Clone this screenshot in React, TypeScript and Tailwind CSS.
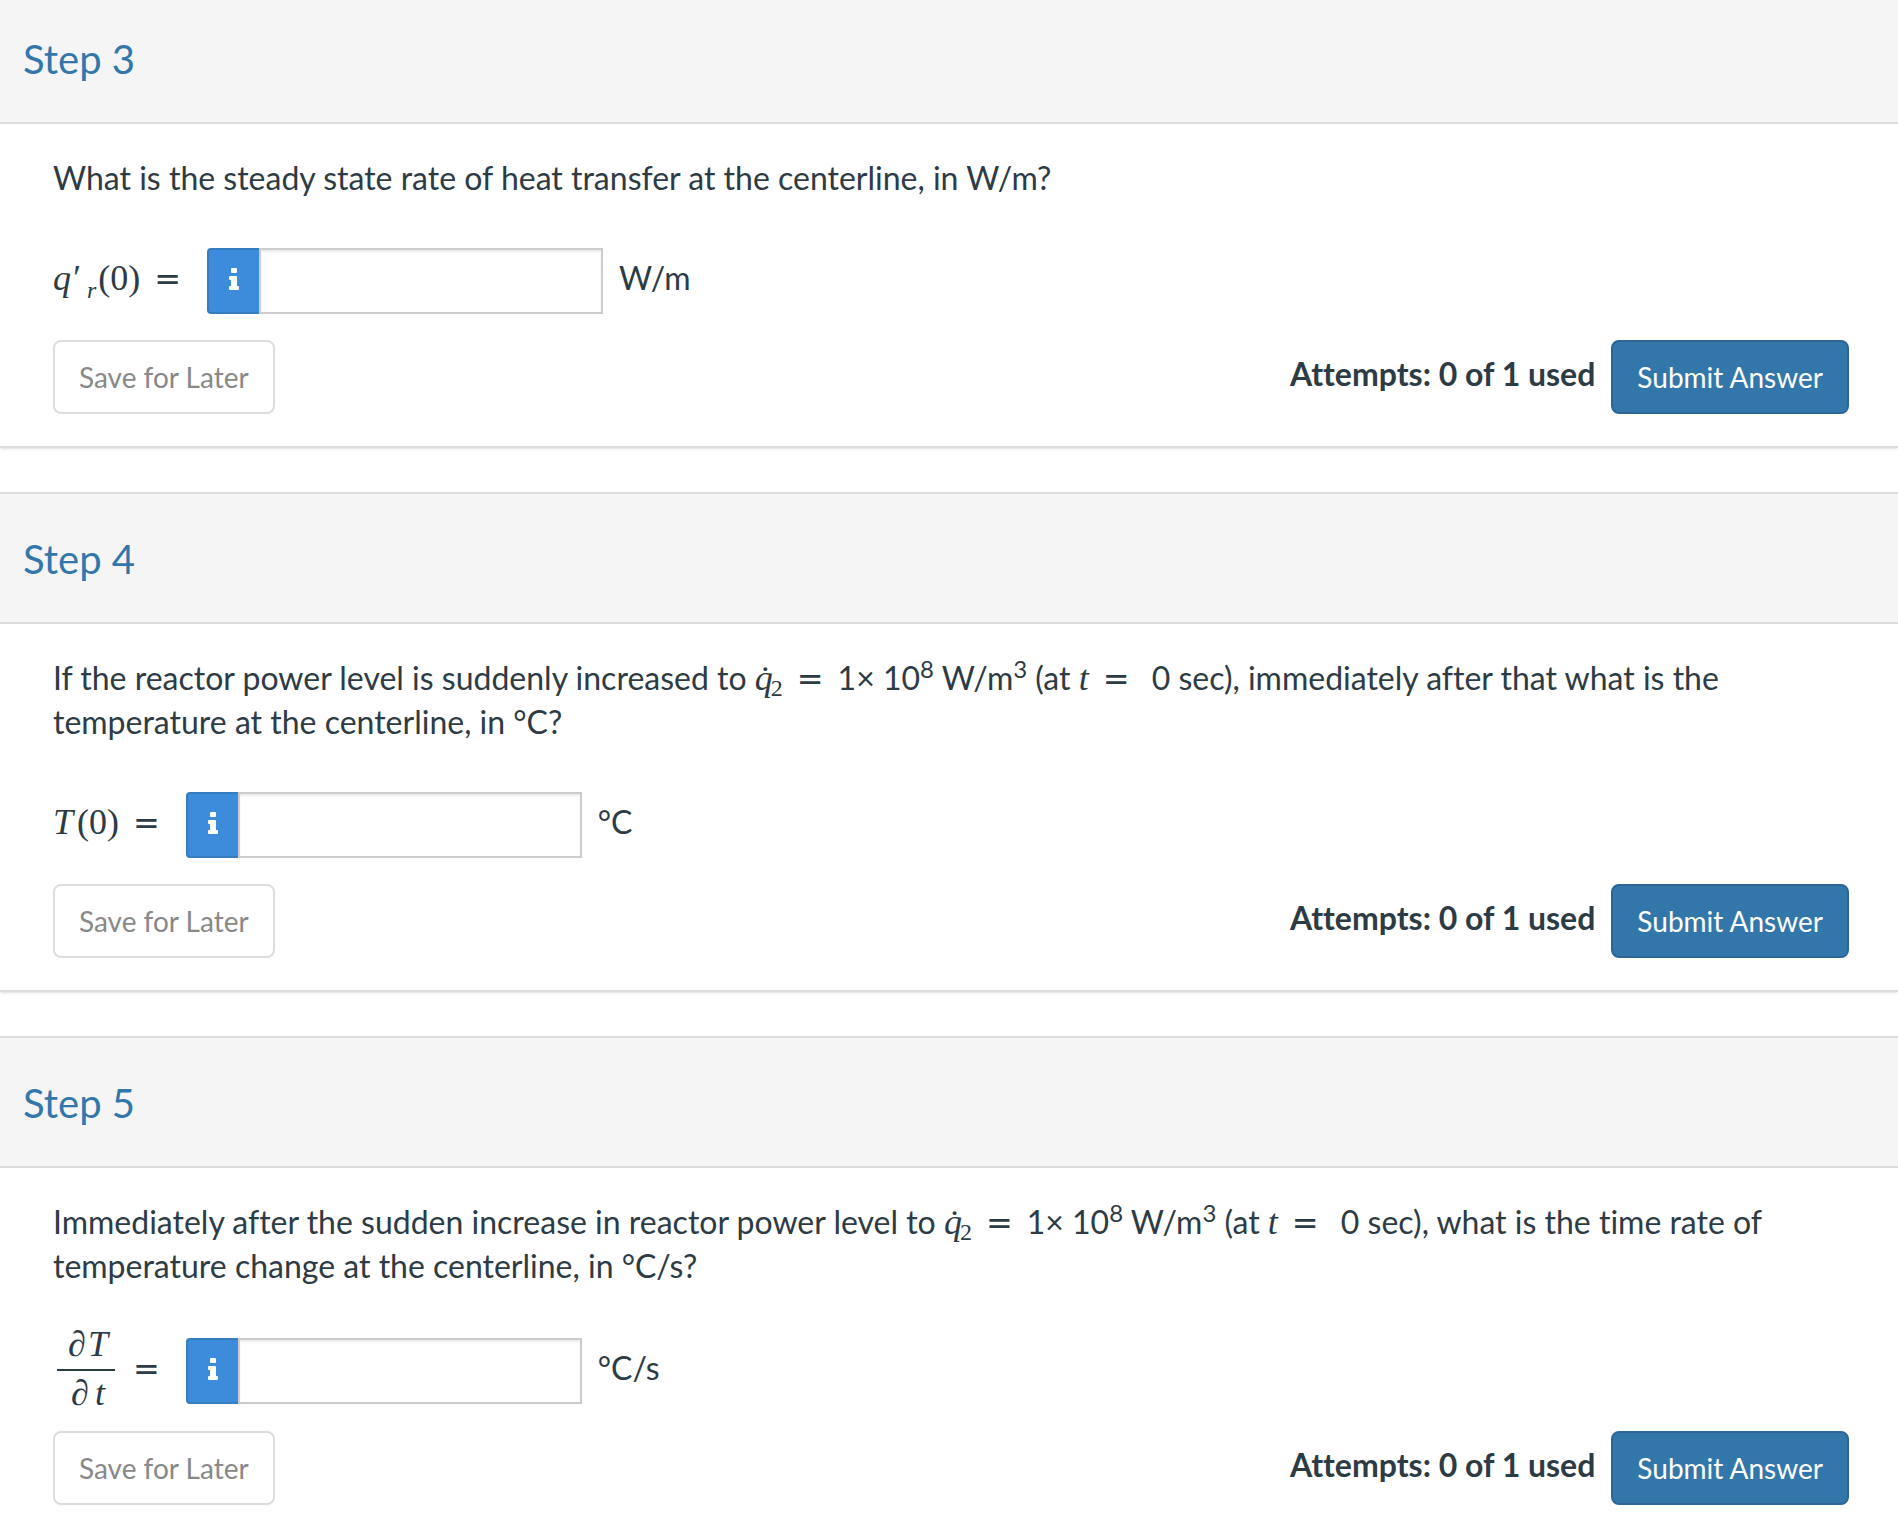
import type { ReactNode } from "react";

function Info() {
  return (
    <svg viewBox="0 0 10 22" className="h-[22px] w-[10px]" fill="currentColor" aria-hidden="true">
      <rect x="2" y="0" width="6" height="5" rx="1" />
      <path d="M1 8h6a1 1 0 0 1 1 1v9h1a1 1 0 0 1 1 1v2a1 1 0 0 1-1 1H1a1 1 0 0 1-1-1v-2a1 1 0 0 1 1-1h1v-6H1a1 1 0 0 1-1-1V9a1 1 0 0 1 1-1z" />
    </svg>
  );
}

const serif = "font-['Liberation_Serif',serif] text-[36px] leading-none";

function Var({ children }: { children: ReactNode }) {
  return <i className={serif}>{children}</i>;
}

function Equals() {
  return <span className="mx-3.5 font-['DejaVu_Sans',sans-serif] text-[32px] leading-none">=</span>;
}

function Flux() {
  return (
    <span className={serif}>
      <i>q̇</i>
      <sub className="bottom-[-6px] -ml-0.5 text-[24px]">2</sub>
    </span>
  );
}

function Conditions() {
  return (
    <>
      <Flux />
      <Equals />
      1× 10<sup>8</sup> W/m<sup>3</sup> (at <Var>t</Var>
      <Equals />
      &nbsp;0 sec)
    </>
  );
}

type StepProps = {
  n: number;
  first?: boolean;
  question: ReactNode;
  symbol: ReactNode;
  unit: string;
};

function Step({ n, first, question, symbol, unit }: StepProps) {
  const id = `answer-${n}`;
  return (
    <section className="mb-11 border-b-2 border-[#dddddd] shadow-sm">
      <header
        className={
          first
            ? "border-b-2 border-[#dddddd] bg-[#f5f5f5] px-[23px] pt-[35px] pb-[39px]"
            : "border-y-2 border-[#dddddd] bg-[#f5f5f5] px-[23px] pt-[41px] pb-[39px]"
        }
      >
        <h2 className="text-[40px] leading-[48px] text-[#3377aa]">Step {n}</h2>
      </header>
      <div className="py-8 pr-[49px] pl-[53px]">
        <p className="text-[32px] leading-[44px]">{question}</p>
        <div className="mt-12 flex items-center">
          <label htmlFor={id} className="mr-3 flex items-center">
            {symbol}
          </label>
          <div className="flex h-[66px] w-[396px]">
            <button
              type="button"
              aria-label="Show hint"
              className="flex w-[52px] items-center justify-center rounded-l-[4px] border-2 border-r-0 border-[#357ebd] bg-[#3d8bdb] pb-1 text-white"
            >
              <Info />
            </button>
            <input
              id={id}
              type="text"
              className="min-w-0 flex-1 border-2 border-[#cccccc] bg-white px-4 text-[32px] shadow-[inset_0_2px_2px_rgba(0,0,0,0.075)]"
            />
          </div>
          <span className="ml-4 pb-1.5 text-[32px] leading-[44px]">{unit}</span>
        </div>
        <div className="mt-[26px] flex items-start justify-between">
          <button
            type="button"
            className="h-[74px] rounded-[8px] border-2 border-[#dddddd] bg-white px-6 text-[28px] leading-[34px] text-[#888888]"
          >
            Save for Later
          </button>
          <div className="flex items-start gap-4">
            <span className="pt-3 text-[32px] leading-[44px] font-bold">Attempts: 0 of 1 used</span>
            <button
              type="button"
              className="h-[74px] rounded-[8px] border-2 border-[#2d6696] bg-[#3377aa] px-6 text-[28px] leading-[34px] text-white"
            >
              Submit Answer
            </button>
          </div>
        </div>
      </div>
    </section>
  );
}

export default function App() {
  return (
    <main className="min-h-screen overflow-hidden bg-white font-['Lato',sans-serif] text-[#2d3b45] [font-variant-ligatures:none]">
      <Step
        n={3}
        first
        question="What is the steady state rate of heat transfer at the centerline, in W/m?"
        symbol={
          <span className="pb-1.5 font-['Liberation_Serif',serif] text-[36px] leading-[44px]">
            <i>q′</i>
            <sub className="bottom-[-8px] ml-2 mr-0.5 text-[24px] italic">r</sub>
            (0)
            <Equals />
          </span>
        }
        unit="W/m"
      />
      <Step
        n={4}
        question={
          <>
            If the reactor power level is suddenly increased to <Conditions />, immediately after that what is the
            temperature at the centerline, in °C?
          </>
        }
        symbol={
          <span className="pb-1.5 font-['Liberation_Serif',serif] text-[36px] leading-[44px]">
            <i className="mr-1">T</i>(0)
            <Equals />
          </span>
        }
        unit="°C"
      />
      <Step
        n={5}
        question={
          <>
            Immediately after the sudden increase in reactor power level to <Conditions />, what is the time rate of
            temperature change at the centerline, in °C/s?
          </>
        }
        symbol={
          <span className="-my-2.5 flex items-center font-['Liberation_Serif',serif] text-[36px] leading-[36px]">
            <span className="mx-1 flex w-[58px] flex-col items-center italic">
              <span className="flex w-full justify-center gap-0.5 border-b-2 border-[#2d3b45] pb-[7px] pl-1">
                <span>∂</span>
                <span>T</span>
              </span>
              <span className="flex gap-1.5 pt-1 pb-1 pl-1">
                <span>∂</span>
                <span>t</span>
              </span>
            </span>
            <span className="pb-1.5">
              <Equals />
            </span>
          </span>
        }
        unit="°C/s"
      />
    </main>
  );
}
